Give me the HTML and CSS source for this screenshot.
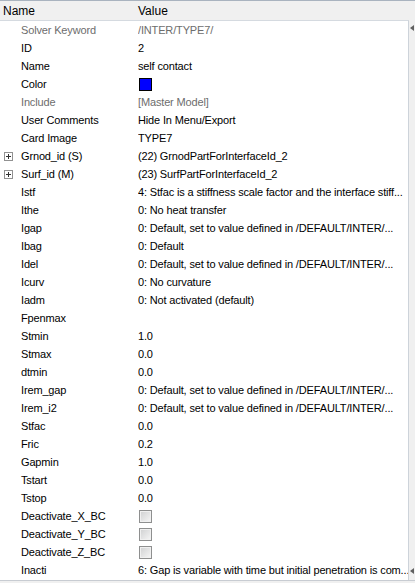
FILE: index.html
```html
<!DOCTYPE html>
<html>
<head>
<meta charset="utf-8">
<link rel="stylesheet" href="styles.css">
</head>
<body>
<div class="grid">
  <div class="header">
    <div class="hname">Name</div>
    <div class="hval">Value</div>
  </div>
  <div class="body">
    <div class="rows">
      <div class="row ro"><div class="name"><span class="ind"></span>Solver Keyword</div><div class="val">/INTER/TYPE7/</div></div>
      <div class="row"><div class="name"><span class="ind"></span>ID</div><div class="val">2</div></div>
      <div class="row"><div class="name"><span class="ind"></span>Name</div><div class="val">self contact</div></div>
      <div class="row"><div class="name"><span class="ind"></span>Color</div><div class="val"><span class="swatch"></span></div></div>
      <div class="row ro"><div class="name"><span class="ind"></span>Include</div><div class="val">[Master Model]</div></div>
      <div class="row"><div class="name"><span class="ind"></span>User Comments</div><div class="val">Hide In Menu/Export</div></div>
      <div class="row"><div class="name"><span class="ind"></span>Card Image</div><div class="val">TYPE7</div></div>
      <div class="row"><div class="name"><span class="ind"><span class="plus"></span></span>Grnod_id (S)</div><div class="val">(22) GrnodPartForInterfaceId_2</div></div>
      <div class="row"><div class="name"><span class="ind"><span class="plus"></span></span>Surf_id (M)</div><div class="val">(23) SurfPartForInterfaceId_2</div></div>
      <div class="row"><div class="name"><span class="ind"></span>Istf</div><div class="val">4: Stfac is a stiffness scale factor and the interface stiff...</div></div>
      <div class="row"><div class="name"><span class="ind"></span>Ithe</div><div class="val">0: No heat transfer</div></div>
      <div class="row"><div class="name"><span class="ind"></span>Igap</div><div class="val">0: Default, set to value defined in /DEFAULT/INTER/...</div></div>
      <div class="row"><div class="name"><span class="ind"></span>Ibag</div><div class="val">0: Default</div></div>
      <div class="row"><div class="name"><span class="ind"></span>Idel</div><div class="val">0: Default, set to value defined in /DEFAULT/INTER/...</div></div>
      <div class="row"><div class="name"><span class="ind"></span>Icurv</div><div class="val">0: No curvature</div></div>
      <div class="row"><div class="name"><span class="ind"></span>Iadm</div><div class="val">0: Not activated (default)</div></div>
      <div class="row"><div class="name"><span class="ind"></span>Fpenmax</div><div class="val"></div></div>
      <div class="row"><div class="name"><span class="ind"></span>Stmin</div><div class="val">1.0</div></div>
      <div class="row"><div class="name"><span class="ind"></span>Stmax</div><div class="val">0.0</div></div>
      <div class="row"><div class="name"><span class="ind"></span>dtmin</div><div class="val">0.0</div></div>
      <div class="row"><div class="name"><span class="ind"></span>Irem_gap</div><div class="val">0: Default, set to value defined in /DEFAULT/INTER/...</div></div>
      <div class="row"><div class="name"><span class="ind"></span>Irem_i2</div><div class="val">0: Default, set to value defined in /DEFAULT/INTER/...</div></div>
      <div class="row"><div class="name"><span class="ind"></span>Stfac</div><div class="val">0.0</div></div>
      <div class="row"><div class="name"><span class="ind"></span>Fric</div><div class="val">0.2</div></div>
      <div class="row"><div class="name"><span class="ind"></span>Gapmin</div><div class="val">1.0</div></div>
      <div class="row"><div class="name"><span class="ind"></span>Tstart</div><div class="val">0.0</div></div>
      <div class="row"><div class="name"><span class="ind"></span>Tstop</div><div class="val">0.0</div></div>
      <div class="row"><div class="name"><span class="ind"></span>Deactivate_X_BC</div><div class="val"><span class="check"></span></div></div>
      <div class="row"><div class="name"><span class="ind"></span>Deactivate_Y_BC</div><div class="val"><span class="check"></span></div></div>
      <div class="row"><div class="name"><span class="ind"></span>Deactivate_Z_BC</div><div class="val"><span class="check"></span></div></div>
      <div class="row"><div class="name"><span class="ind"></span>Inacti</div><div class="val">6: Gap is variable with time but initial penetration is com...</div></div>
    </div>
    <div class="scroll">
      <span class="arrow top"></span>
      <span class="arrow bottom"></span>
    </div>
  </div>
  <div class="footer"></div>
</div>
</body>
</html>
```

FILE: styles.css
```css
html, body {
  margin: 0;
  padding: 0;
  background: #f0f0f0;
}
body {
  font-family: "Liberation Sans", Arial, sans-serif;
  font-size: 11px;
  color: #000;
  width: 415px;
  height: 583px;
  overflow: hidden;
}
.grid {
  display: flex;
  flex-direction: column;
  height: 583px;
}
.header {
  display: flex;
  height: 20px;
  align-items: center;
  border-top: 1px solid #a9b3bf;
  background: #f0f0f0;
  font-size: 12px;
  color: #000;
  box-sizing: border-box;
}
.hname {
  width: 135px;
  padding-left: 3px;
}
.hval {
  flex: 1;
}
.body {
  display: flex;
  flex: 0 0 560px;
  background: #f0f0f0;
}
.rows {
  width: 409px;
  background: #fff;
  border-top: 1px solid #d5dae0;
  border-right: 1px solid #cdd3da;
  box-sizing: border-box;
  overflow: hidden;
  letter-spacing: -0.15px;
}
.row {
  display: flex;
  height: 18px;
  align-items: center;
  white-space: nowrap;
}
.name {
  display: flex;
  align-items: center;
  flex: 0 0 138px;
  overflow: hidden;
}
.ind {
  flex: 0 0 21px;
  display: flex;
  align-items: center;
  padding-left: 4px;
  box-sizing: border-box;
}
.val {
  flex: 1;
  overflow: hidden;
  display: flex;
  align-items: center;
}
.ro .name, .ro .val {
  color: #6d6d6d;
}
.plus {
  position: relative;
  width: 9px;
  height: 9px;
  box-sizing: border-box;
  border: 1px solid #919191;
  background: #fff;
}
.plus::before {
  content: "";
  position: absolute;
  left: 1px;
  top: 3px;
  width: 5px;
  height: 1px;
  background: #333;
}
.plus::after {
  content: "";
  position: absolute;
  left: 3px;
  top: 1px;
  width: 1px;
  height: 5px;
  background: #333;
}
.swatch {
  width: 13px;
  height: 13px;
  box-sizing: border-box;
  border: 1px solid #000;
  background: #0000ff;
  margin-left: 1px;
}
.check {
  width: 13px;
  height: 13px;
  box-sizing: border-box;
  border: 1px solid #8e8f8f;
  background: linear-gradient(135deg, #cfd0d1, #f6f6f6);
  box-shadow: inset 0 0 0 1px #f0f0f0;
  margin-left: 1px;
}
.scroll {
  flex: 1;
  position: relative;
  background: #f0f0f0;
}
.arrow {
  position: absolute;
  left: 1px;
  width: 0;
  height: 0;
  border-top: 3px solid transparent;
  border-bottom: 3px solid transparent;
  border-right: 4px solid #606060;
}
.arrow.top { top: 5px; }
.arrow.bottom { top: 548px; }
.footer {
  flex: 1;
  border-top: 1px solid #c8ccd2;
  background: #f0f0f0;
}
```
